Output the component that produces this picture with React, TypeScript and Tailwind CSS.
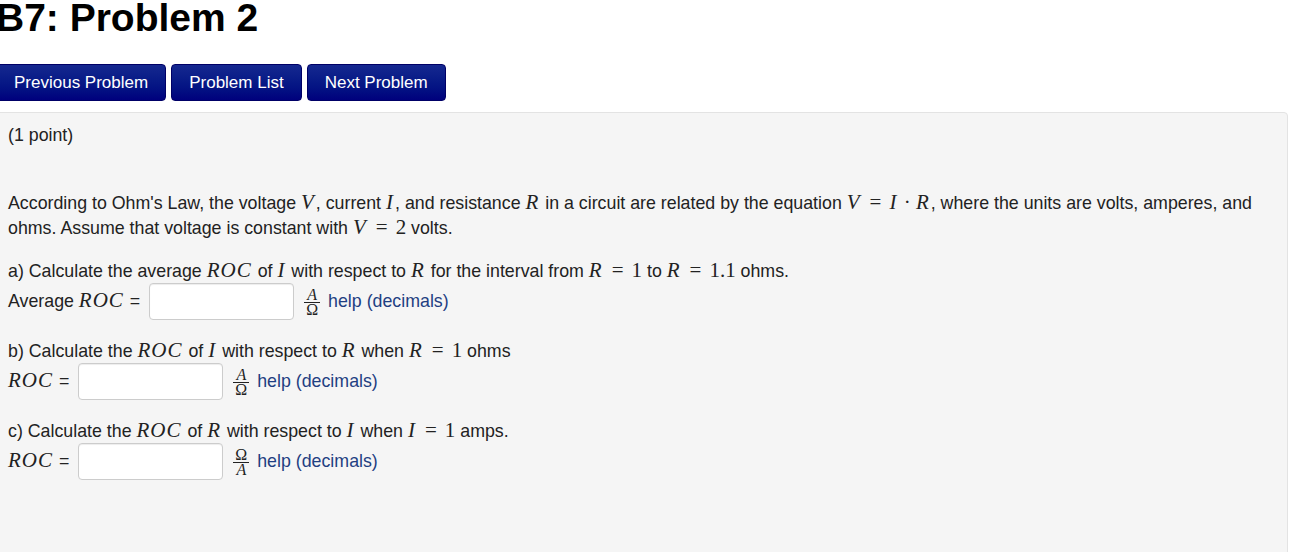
import type { ReactNode } from "react";

function V({ children }: { children: ReactNode }) {
  return (
    <span className="font-['Liberation_Serif',serif] italic text-[21px] leading-none tracking-[1px] pr-[1px]">
      {children}
    </span>
  );
}

function N({ children }: { children: ReactNode }) {
  return <span className="font-['Liberation_Serif',serif] text-[21px] leading-none">{children}</span>;
}

function Eq() {
  return <span className="font-['Liberation_Serif',serif] text-[21px] leading-none mx-[8px]">=</span>;
}

function Frac({ top, bottom }: { top: string; bottom: string }) {
  return (
    <span className="inline-flex flex-col items-center font-['Liberation_Serif',serif] text-[16px] leading-[12px] ml-[10px] mr-[8px] mt-[2px] text-[#222]">
      <span className={top === "A" ? "italic px-[2px] pb-[1px]" : "px-[2px] pb-[1px]"}>{top}</span>
      <span className="w-full h-px bg-[#222]" />
      <span className={bottom === "A" ? "italic px-[2px] pt-[1px]" : "px-[2px] pt-[1px]"}>{bottom}</span>
    </span>
  );
}

function Answer({ label, units }: { label: ReactNode; units: [string, string] }) {
  return (
    <div className="flex items-center h-[37px] -mt-px">
      <span className="mr-[9px]">{label}</span>
      <input
        type="text"
        className="w-[145px] h-[37px] bg-white border border-[#cccccc] rounded-[4px] shadow-[inset_0_1px_1px_rgba(0,0,0,0.075)]"
      />
      <Frac top={units[0]} bottom={units[1]} />
      <span className="text-[#1f3f82]">help (decimals)</span>
    </div>
  );
}

export default function App() {
  const buttons = ["Previous Problem", "Problem List", "Next Problem"];
  return (
    <div className="min-h-screen bg-white overflow-hidden font-['Liberation_Sans',Arial,sans-serif] text-[#222]">
      <div className="ml-[-4px] w-[1292px]">
        <h1 className="mt-[-2px] text-[39px] leading-[40px] font-bold text-black">B7: Problem 2</h1>

        <div className="mt-[26px] flex gap-[5px]">
          {buttons.map((b) => (
            <button
              key={b}
              className="h-[37px] px-[17px] text-[17px] text-white rounded-[4px] border border-[#000066] bg-gradient-to-b from-[#15288f] to-[#00007d]"
            >
              {b}
            </button>
          ))}
        </div>

        <div className="mt-[11px] h-[460px] pl-[11px] pr-3 pt-[10px] bg-[#f5f5f5] border border-[#e3e3e3] rounded-[4px] text-[17.8px] leading-[25px]">
          <p>(1 point)</p>

          <p className="mt-[43px]">
            According to Ohm's Law, the voltage <V>V</V>, current <V>I</V>, and resistance <V>R</V> in a
            circuit are related by the equation <V>V</V>
            <Eq />
            <V>I</V>
            <N> · </N>
            <V>R</V>, where the units are volts, amperes, and ohms. Assume that voltage is constant with{" "}
            <V>V</V>
            <Eq />
            <N>2</N> volts.
          </p>

          <div className="mt-[18px]">
            <p>
              a) Calculate the average <V>ROC</V> of <V>I</V> with respect to <V>R</V> for the interval from{" "}
              <V>R</V>
              <Eq />
              <N>1</N> to <V>R</V>
              <Eq />
              <N>1.1</N> ohms.
            </p>
            <Answer
              label={
                <>
                  Average <V>ROC</V> =
                </>
              }
              units={["A", "Ω"]}
            />
          </div>

          <div className="mt-[19px]">
            <p>
              b) Calculate the <V>ROC</V> of <V>I</V> with respect to <V>R</V> when <V>R</V>
              <Eq />
              <N>1</N> ohms
            </p>
            <Answer
              label={
                <>
                  <V>ROC</V> =
                </>
              }
              units={["A", "Ω"]}
            />
          </div>

          <div className="mt-[19px]">
            <p>
              c) Calculate the <V>ROC</V> of <V>R</V> with respect to <V>I</V> when <V>I</V>
              <Eq />
              <N>1</N> amps.
            </p>
            <Answer
              label={
                <>
                  <V>ROC</V> =
                </>
              }
              units={["Ω", "A"]}
            />
          </div>
        </div>
      </div>
    </div>
  );
}
